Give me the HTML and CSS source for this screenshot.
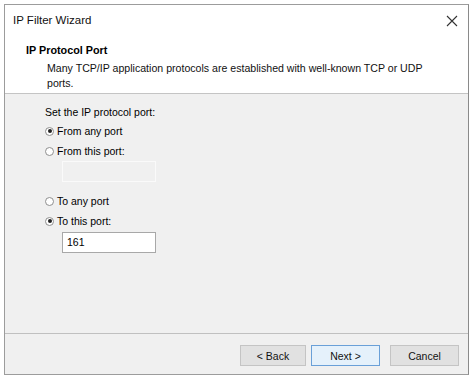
FILE: index.html
```html
<!DOCTYPE html>
<html lang="en">
<head>
  <meta charset="UTF-8" />
  <title>IP Filter Wizard</title>
  <link rel="stylesheet" href="styles.css">
</head>
<body>
  <div class="window">
    <div class="titlebar">
      <span class="title">IP Filter Wizard</span>
      <svg class="close" width="12" height="12" viewBox="0 0 12 12">
        <path d="M1 1 L11 11 M11 1 L1 11" stroke="#333" stroke-width="1.1" fill="none"/>
      </svg>
    </div>

    <div class="header">
      <h2>IP Protocol Port</h2>
      <p>Many TCP/IP application protocols are established with well-known TCP or UDP<br>ports.</p>
    </div>

    <div class="content">
      <div class="label">Set the IP protocol port:</div>
      <label class="radio"><span class="dot checked"></span>From any port</label>
      <label class="radio"><span class="dot"></span>From this port:</label>
      <div class="field disabled"></div>
      <label class="radio gap"><span class="dot"></span>To any port</label>
      <label class="radio"><span class="dot checked"></span>To this port:</label>
      <div class="field filled">161</div>
    </div>

    <div class="footer">
      <button class="btn">&lt; Back</button>
      <button class="btn primary">Next &gt;</button>
      <button class="btn cancel">Cancel</button>
    </div>
  </div>
</body>
</html>
```

FILE: styles.css
```css
body, html {
  margin: 0;
  padding: 0;
  background: #ffffff;
  font-family: 'Liberation Sans', Arial, sans-serif;
  color: #000;
}

.window {
  margin: 4px 0 0 4px;
  width: 463px;
  height: 369px;
  border: 1px solid #9c9c9c;
  border-right-color: #8a8a8a;
  background: #f0f0f0;
  display: flex;
  flex-direction: column;
}

.titlebar {
  height: 30px;
  flex-shrink: 0;
  background: #fff;
  display: flex;
  align-items: center;
  justify-content: space-between;
  padding: 0 10px 0 8px;
}

.title {
  font-size: 11.5px;
  color: #111;
}

.close {
  margin-top: 1px;
}

.header {
  background: #fff;
  height: 50px;
  flex-shrink: 0;
  padding: 8px 0 0 21px;
  border-bottom: 1px solid #c4c4c4;
}

h2 {
  margin: 0;
  font-size: 10.8px;
  line-height: 14px;
  font-weight: bold;
  color: #000;
}

.header p {
  margin: 4px 0 0 21px;
  font-size: 10.6px;
  line-height: 15px;
  color: #111;
}

.content {
  flex: 1;
  padding: 10px 0 0 40px;
  border-bottom: 1px solid #c0c0c0;
  font-size: 10.5px;
}

.label {
  height: 17px;
  line-height: 17px;
}

.radio {
  display: flex;
  align-items: center;
  height: 20px;
  line-height: 20px;
}

.radio.gap {
  margin-top: 9px;
}

.dot {
  width: 7px;
  height: 7px;
  border: 1px solid #8f8f8f;
  border-radius: 50%;
  background: #fff;
  margin: 0 3px 0 0;
  position: relative;
}

.dot.checked::after {
  content: "";
  position: absolute;
  left: 1.5px;
  top: 1.5px;
  width: 4px;
  height: 4px;
  border-radius: 50%;
  background: #222;
}

.field {
  margin: 0 0 0 17px;
  width: 88px;
  height: 19px;
  border: 1px solid #a8a8a8;
  background: #fff;
  font-size: 10.5px;
  line-height: 19px;
  padding-left: 4px;
}

.field.disabled {
  border-color: #fafafa;
  background: #f0f0f0;
}

.field.filled {
  margin-top: 1px;
}

.footer {
  height: 40px;
  flex-shrink: 0;
  display: flex;
  justify-content: flex-end;
  align-items: flex-start;
  padding: 11px 9px 0 0;
  box-sizing: border-box;
}

.btn {
  width: 66px;
  height: 21px;
  margin-left: 5px;
  border: 1px solid #c4c4c4;
  background: #e1e1e1;
  font-family: 'Liberation Sans', Arial, sans-serif;
  font-size: 10.5px;
  color: #111;
  padding: 0;
}

.btn.primary {
  width: 69px;
  border-color: #6aa0d8;
  background: #e5f1fb;
}

.btn.cancel {
  width: 69px;
  margin-left: 10px;
}
```
